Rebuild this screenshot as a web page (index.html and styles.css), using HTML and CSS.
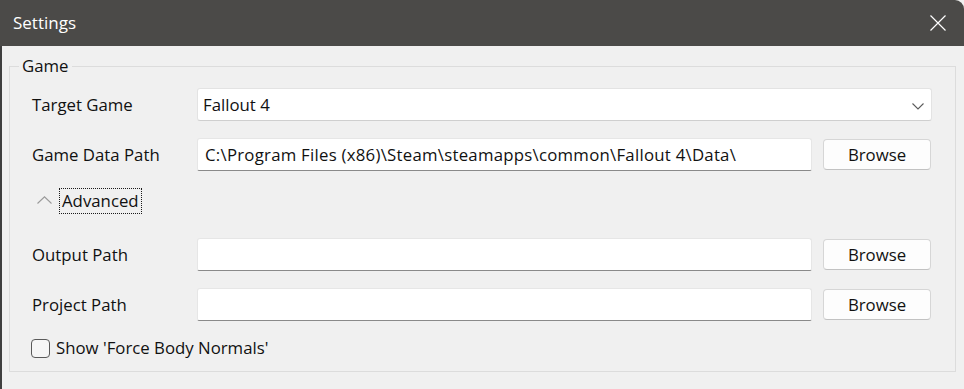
FILE: index.html
```html
<!DOCTYPE html>
<html>
<head>
<meta charset="utf-8">
<link rel="stylesheet" href="styles.css">
</head>
<body>
<div class="window">
  <div class="titlebar">
    <span class="title">Settings</span>
    <svg class="close" width="16" height="16" viewBox="0 0 16 16"><path d="M0.5 0.5 L15.5 15.5 M15.5 0.5 L0.5 15.5" stroke="#ffffff" stroke-width="1.2" fill="none"/></svg>
  </div>
  <div class="content">
    <div class="group">
      <span class="legend">Game</span>
      <div class="row r1">
        <span class="label">Target Game</span>
        <div class="combo"><span>Fallout 4</span><svg width="12" height="7" viewBox="0 0 12 7"><path d="M0.5 0.5 L6 6 L11.5 0.5" stroke="#5c5c5c" stroke-width="1.1" fill="none"/></svg></div>
      </div>
      <div class="row r2">
        <span class="label">Game Data Path</span>
        <div class="textbox">C:\Program Files (x86)\Steam\steamapps\common\Fallout 4\Data\</div>
        <div class="btn">Browse</div>
      </div>
      <div class="adv">
        <svg class="chev" width="15" height="8" viewBox="0 0 15 8"><path d="M0.5 7.5 L7.5 0.8 L14.5 7.5" stroke="#9a9a9a" stroke-width="1.1" fill="none"/></svg>
        <span class="focus">Advanced</span>
      </div>
      <div class="row r4">
        <span class="label">Output Path</span>
        <div class="textbox"></div>
        <div class="btn">Browse</div>
      </div>
      <div class="row r5">
        <span class="label">Project Path</span>
        <div class="textbox"></div>
        <div class="btn">Browse</div>
      </div>
      <div class="check">
        <span class="box"></span>
        <span class="check-label">Show 'Force Body Normals'</span>
      </div>
    </div>
  </div>
</div>
</body>
</html>
```

FILE: styles.css
```css
html, body {
  margin: 0;
  padding: 0;
  background: #f0f0f0;
}
body {
  font-family: "Open Sans", "Noto Sans", sans-serif;
  font-size: 16.8px;
  line-height: 20px;
  color: #111111;
}
.window {
  width: 964px;
  height: 389px;
  display: flex;
  flex-direction: column;
  border-top-right-radius: 9px;
  overflow: hidden;
  background: #f0f0f0;
}
.titlebar {
  height: 46px;
  flex: none;
  background: #4b4a48;
  display: flex;
  align-items: center;
  padding-left: 13px;
  color: #ffffff;
}
.title {
  font-size: 17px;
  margin-top: -1px;
}
.close {
  margin-left: auto;
  margin-right: 18px;
}
.content {
  flex: 1;
  border-left: 2px solid #3f3f3f;
  padding: 20px 8px 17px 7px;
  display: flex;
  flex-direction: column;
}
.group {
  position: relative;
  flex: 1;
  border: 1px solid #dcdcdc;
  padding: 0 24px 0 22px;
  display: flex;
  flex-direction: column;
}
.legend {
  position: absolute;
  top: -11px;
  left: 9px;
  padding: 0 3px;
  background: #f0f0f0;
  line-height: 20px;
}
.row {
  display: grid;
  grid-template-columns: 165px 1fr 108px;
  align-items: center;
  height: 33px;
  margin-top: 17px;
}
.r1 { margin-top: 21px; }
.r4 { margin-top: 24px; }
.label {
  white-space: nowrap;
}
.combo {
  grid-column: 2 / 4;
  height: 33px;
  box-sizing: border-box;
  background: #ffffff;
  border: 1px solid #e3e3e3;
  border-bottom-color: #cfcfcf;
  border-radius: 3px;
  display: flex;
  align-items: center;
  padding: 0 7px 0 5px;
  margin-right: -1px;
}
.combo svg {
  margin-left: auto;
  margin-top: 3px;
}
.textbox {
  height: 33px;
  box-sizing: border-box;
  background: #ffffff;
  border: 1px solid #e6e6e6;
  border-bottom: 1px solid #8a8a8a;
  border-radius: 3px 3px 2px 2px;
  margin-right: 11px;
  padding: 0 7px;
  display: flex;
  align-items: center;
  white-space: nowrap;
  overflow: hidden;
  letter-spacing: 0.25px;
}
.btn {
  height: 31px;
  box-sizing: border-box;
  background: #fdfdfd;
  border: 1px solid #d6d6d6;
  border-bottom-color: #c2c2c2;
  border-radius: 4px;
  display: flex;
  align-items: center;
  justify-content: center;
}
.adv {
  display: flex;
  align-items: center;
  height: 26px;
  margin-top: 17px;
}
.chev {
  margin-left: 5px;
  margin-right: 7px;
  margin-top: -2px;
}
.focus {
  border: 1px dotted #1b1b1b;
  padding: 0 2px 0 2px;
  height: 24px;
  line-height: 24px;
}
.check {
  display: flex;
  align-items: center;
  height: 20px;
  margin-top: 17px;
}
.box {
  width: 19px;
  height: 19px;
  box-sizing: border-box;
  border: 1px solid #5a5a5a;
  border-radius: 4px;
  background: #f6f6f6;
  margin-left: -1px;
  margin-right: 6px;
}
```
